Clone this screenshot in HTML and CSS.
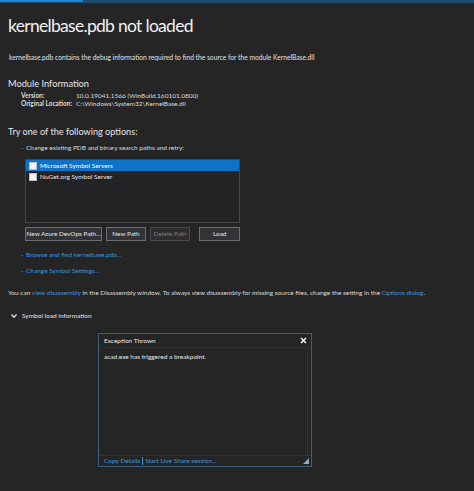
FILE: index.html
```html
<!DOCTYPE html>
<html lang="en">
<head>
<meta charset="utf-8">
<title>kernelbase.pdb not loaded</title>
<link rel="stylesheet" href="styles.css">
</head>
<body>
<div class="topbar"><div class="topbar-accent"></div></div>
<main class="page">
  <h1 class="title">kernelbase.pdb not loaded</h1>
  <p class="desc">kernelbase.pdb contains the debug information required to find the source for the module KernelBase.dll</p>

  <h2 class="section">Module Information</h2>
  <div class="info">
    <span class="info-label">Version:</span><span class="info-value">10.0.19041.1566 (WinBuild.160101.0800)</span>
    <span class="info-label">Original Location:</span><span class="info-value">C:\Windows\System32\KernelBase.dll</span>
  </div>

  <h2 class="section section-options">Try one of the following options:</h2>
  <ul class="options">
    <li class="option">
      <div class="option-text"><span class="dash">-</span>Change existing PDB and binary search paths and retry:</div>
      <div class="paths">
        <div class="listbox">
          <div class="row row-selected"><span class="check"></span>Microsoft Symbol Servers</div>
          <div class="row"><span class="check"></span>NuGet.org Symbol Server</div>
        </div>
        <div class="buttons">
          <button class="btn btn-azure">New Azure DevOps Path...</button>
          <button class="btn btn-new">New Path</button>
          <button class="btn btn-delete" disabled>Delete Path</button>
          <button class="btn btn-load">Load</button>
        </div>
      </div>
    </li>
    <li class="option option-link option-first"><span class="dash">-</span><a class="link">Browse and find kernelbase.pdb...</a></li>
    <li class="option option-link"><span class="dash">-</span><a class="link">Change Symbol Settings...</a></li>
  </ul>

  <p class="note">You can <a class="link">view disassembly</a> in the Disassembly window. To always view disassembly for missing source files, change the setting in the <a class="link">Options dialog</a>.</p>

  <div class="expander"><svg class="chev" width="6" height="4" viewBox="0 0 6 4"><path d="M0.5 0.5 L3 3.2 L5.5 0.5" fill="none" stroke="#e8e8e8" stroke-width="1.3"/></svg><span>Symbol load information</span></div>

  <div class="dialog">
    <div class="dialog-title">
      <span>Exception Thrown</span>
      <svg class="close" width="7" height="7" viewBox="0 0 7 7"><path d="M1 1 L6 6 M6 1 L1 6" stroke="#f0f0f0" stroke-width="1.6"/></svg>
    </div>
    <div class="dialog-body">acad.exe has triggered a breakpoint.</div>
    <div class="dialog-footer">
      <a class="link">Copy Details</a><span class="sep"></span><a class="link">Start Live Share session...</a>
      <svg class="grip" width="6" height="6" viewBox="0 0 6 6"><path d="M6 0 L6 6 L0 6 Z" fill="#9aa4ad"/></svg>
    </div>
  </div>
</main>
</body>
</html>
```

FILE: styles.css
```css
* { box-sizing: border-box; }
html, body { margin: 0; padding: 0; }
body {
  background: #252526;
  color: #dadada;
  font-family: "Lato", "Noto Sans", sans-serif;
  width: 474px;
  height: 491px;
  overflow: hidden;
}
.topbar {
  height: 3px;
  background: #1f4d70;
}
.topbar-accent {
  width: 83px;
  height: 2px;
  background: #1f83d4;
}
.page {
  padding: 0 0 0 8px;
}
.title {
  margin: 10px 0 0 0;
  font-weight: 400;
  font-size: 17.5px;
  letter-spacing: -0.7px;
  line-height: 26px;
  color: #f1f1f1;
}
.desc {
  margin: 14px 0 0 1px;
  font-size: 6.7px;
  line-height: 8px;
  color: #e0e0e0;
}
.section {
  margin: 17px 0 0 0;
  font-weight: 400;
  font-size: 9.25px;
  line-height: 12px;
  color: #e6e6e6;
}
.info {
  display: grid;
  grid-template-columns: 55px auto;
  margin: 2px 0 0 13px;
  font-size: 6.5px;
  line-height: 8px;
  color: #dcdcdc;
}
.info-label { font-weight: 700; }
.section-options { margin-top: 18px; font-size: 9.15px; }
.options {
  list-style: none;
  margin: 6px 0 0 0;
  padding: 0 0 0 13px;
  font-size: 6.5px;
  line-height: 8px;
}
.dash {
  display: inline-block;
  width: 5px;
  color: #bbbbbb;
}
.option-text { color: #dcdcdc; }
.paths {
  margin: 7px 0 0 4px;
  width: 215px;
}
.listbox {
  height: 64px;
  border: 1px solid #45454a;
  background: #232325;
}
.row {
  display: flex;
  align-items: center;
  height: 11px;
  padding-left: 3px;
  color: #e6e6e6;
  font-size: 6.5px;
}
.row-selected { background: #0e73c6; color: #ffffff; }
.check {
  width: 8px;
  height: 8px;
  background: #f4f4f4;
  margin-right: 3px;
  border: 1px solid #bfbfbf;
}
.buttons {
  display: flex;
  margin-top: 4px;
}
.btn {
  height: 14px;
  padding: 0;
  border: 1px solid #6f6f73;
  background: #333337;
  color: #e6e6e6;
  font-family: inherit;
  font-size: 6.4px;
  line-height: 12px;
  white-space: nowrap;
  overflow: hidden;
}
.btn-azure { width: 78px; }
.btn-new { width: 40px; margin-left: 4px; }
.btn-delete { width: 41px; margin-left: 4px; color: #7a7a7a; border-color: #4a4a4e; background: #2d2d30; }
.btn-load { width: 41px; margin-left: 9px; }
.option-link { margin-top: 8px; }
.option-first { margin-top: 10px; }
.link { color: #3a96dd; text-decoration: none; }
.note {
  margin: 14px 0 0 0;
  font-size: 6.5px;
  line-height: 8px;
  color: #dcdcdc;
}
.expander {
  display: flex;
  align-items: center;
  margin: 15px 0 0 3px;
  font-size: 6.5px;
  line-height: 8px;
  color: #e6e6e6;
}
.chev { margin-right: 5px; }
.dialog {
  margin: 13px 0 0 90px;
  width: 214px;
  height: 134px;
  border: 1px solid #3c5f7c;
  background: #252526;
  display: flex;
  flex-direction: column;
  font-size: 6.5px;
  line-height: 8px;
}
.dialog-title {
  display: flex;
  justify-content: space-between;
  align-items: center;
  height: 14px;
  padding: 0 4px 0 5px;
  color: #e6e6e6;
  border-bottom: 1px solid #2f2f33;
}
.dialog-body {
  flex: 1;
  padding: 5px 5px;
  color: #e6e6e6;
  border-right: 1px solid #333336;
  margin-right: 3px;
}
.dialog-footer {
  display: flex;
  align-items: center;
  height: 11px;
  padding: 0 0 1px 5px;
  position: relative;
  border-top: 1px solid #333336;
}
.sep {
  display: inline-block;
  width: 1px;
  height: 8px;
  background: #3a96dd;
  margin: 0 2px;
}
.grip {
  position: absolute;
  right: 2px;
  bottom: 2px;
}
```
